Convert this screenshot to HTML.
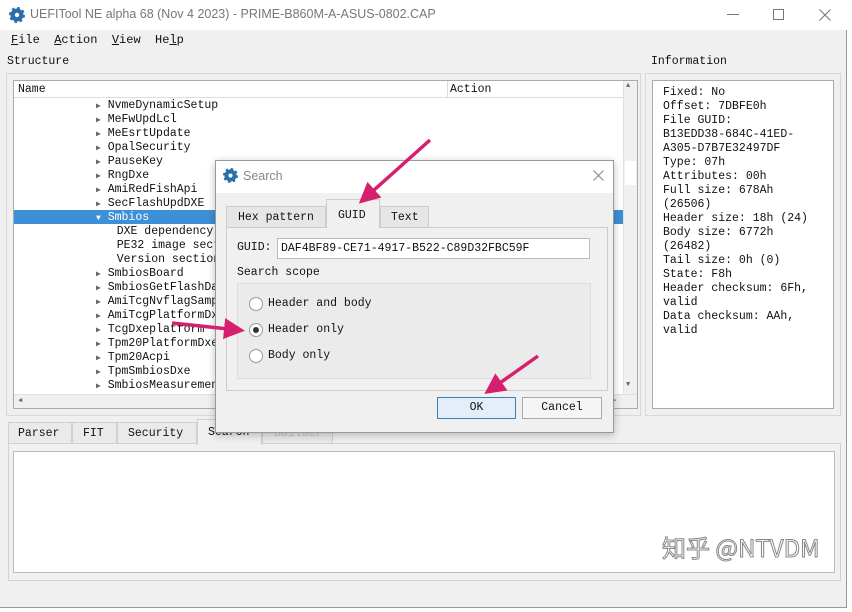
<!DOCTYPE html>
<html><head><meta charset="utf-8"><style>
*{box-sizing:border-box;margin:0;padding:0}
body{width:852px;height:612px;background:#fff;position:relative;overflow:hidden;font-family:"Liberation Mono","DejaVu Sans Mono",monospace;font-size:11.5px;color:#111}
.a{position:absolute}
.win{left:0;top:0;width:847px;height:608px;background:#f0f0f0;border-right:1px solid #999;border-bottom:1px solid #999}
.mono{font-family:"Liberation Mono",monospace;font-size:11.5px;white-space:pre;line-height:14px}
.row{position:absolute;left:0;height:14px;line-height:14px;white-space:pre}
.tri{color:#666;font-size:8px}
</style></head><body>
<div class="a win"></div>
<div class="a" style="left:0;top:0;width:847px;height:30px;background:#fff"></div>
<svg class="a" style="left:9px;top:7px" width="16" height="16" viewBox="0 0 16 16"><circle cx="8" cy="8" r="6.5" fill="#2a6fa8" stroke="#2a6fa8" stroke-width="3" stroke-dasharray="2.5 2.6"/><circle cx="8" cy="8" r="5" fill="#2a6fa8"/><circle cx="8" cy="8" r="2.2" fill="#fff"/></svg>
<div class="a" style="left:30px;top:7px;font-family:'Liberation Sans',sans-serif;font-size:12.5px;color:#777">UEFITool NE alpha 68 (Nov  4 2023) - PRIME-B860M-A-ASUS-0802.CAP</div>
<div class="a" style="left:727px;top:14px;width:12px;height:1px;background:#777"></div>
<div class="a" style="left:773px;top:9px;width:11px;height:11px;border:1px solid #777"></div>
<svg class="a" style="left:819px;top:9px" width="12" height="12"><path d="M0.5 0.5L11.5 11.5M11.5 0.5L0.5 11.5" stroke="#777" stroke-width="1.1"/></svg>
<div class="a mono" style="left:11px;top:33px;font-size:12px"><u>F</u>ile  <u>A</u>ction  <u>V</u>iew  He<u>l</u>p</div>
<div class="a mono" style="left:7px;top:55px">Structure</div>
<div class="a mono" style="left:651px;top:55px">Information</div>
<div class="a" style="left:6px;top:73px;width:635px;height:343px;border:1px solid #d8d8d8"></div>
<div class="a" style="left:13px;top:80px;width:625px;height:329px;background:#fff;border:1px solid #aaa;overflow:hidden">
 <div class="a" style="left:0;top:0;width:609px;height:17px;border-bottom:1px solid #ddd;background:#fff"></div>
 <div class="a mono" style="left:4px;top:2px">Name</div>
 <div class="a" style="left:433px;top:0;width:1px;height:17px;background:#ddd"></div>
 <div class="a mono" style="left:436px;top:2px">Action</div>
 <div class="a" style="left:0;top:129px;width:609px;height:14px;background:#3d8fd6"></div>
 <div class="a mono" style="left:82px;top:18px;">
<div class="row" style="top:0"><span class="tri">▶</span> NvmeDynamicSetup</div>
<div class="row" style="top:14px"><span class="tri">▶</span> MeFwUpdLcl</div>
<div class="row" style="top:28px"><span class="tri">▶</span> MeEsrtUpdate</div>
<div class="row" style="top:42px"><span class="tri">▶</span> OpalSecurity</div>
<div class="row" style="top:56px"><span class="tri">▶</span> PauseKey</div>
<div class="row" style="top:70px"><span class="tri">▶</span> RngDxe</div>
<div class="row" style="top:84px"><span class="tri">▶</span> AmiRedFishApi</div>
<div class="row" style="top:98px"><span class="tri">▶</span> SecFlashUpdDXE</div>
<div class="row" style="top:112px;color:#fff"><span class="tri" style="color:#fff">▼</span> Smbios</div>
<div class="row" style="top:126px">   DXE dependency section</div>
<div class="row" style="top:140px">   PE32 image section</div>
<div class="row" style="top:154px">   Version section</div>
<div class="row" style="top:168px"><span class="tri">▶</span> SmbiosBoard</div>
<div class="row" style="top:182px"><span class="tri">▶</span> SmbiosGetFlashData</div>
<div class="row" style="top:196px"><span class="tri">▶</span> AmiTcgNvflagSample</div>
<div class="row" style="top:210px"><span class="tri">▶</span> AmiTcgPlatformDxe</div>
<div class="row" style="top:224px"><span class="tri">▶</span> TcgDxeplatform</div>
<div class="row" style="top:238px"><span class="tri">▶</span> Tpm20PlatformDxe</div>
<div class="row" style="top:252px"><span class="tri">▶</span> Tpm20Acpi</div>
<div class="row" style="top:266px"><span class="tri">▶</span> TpmSmbiosDxe</div>
<div class="row" style="top:280px"><span class="tri">▶</span> SmbiosMeasurement</div>
 </div>
 <div class="a" style="left:609px;top:0;width:15px;height:313px;background:#f0f0f0;border-left:1px solid #e0e0e0"></div>
 <div class="a" style="left:611px;top:80px;width:11px;height:24px;background:#fff"></div>
 <div class="a" style="left:612px;top:1px;font-size:7px;color:#666">▲</div>
 <div class="a" style="left:612px;top:300px;font-size:7px;color:#666">▼</div>
 <div class="a" style="left:0;top:313px;width:624px;height:15px;background:#f0f0f0;border-top:1px solid #e0e0e0"></div>
 <div class="a" style="left:4px;top:315px;font-size:7px;color:#666">◀</div>
 <div class="a" style="left:598px;top:315px;font-size:7px;color:#666">▶</div>
</div>
<div class="a" style="left:645px;top:73px;width:196px;height:343px;border:1px solid #d8d8d8"></div>
<div class="a mono" style="left:652px;top:80px;width:182px;height:329px;background:#fff;border:1px solid #aaa;padding:5px 0 0 10px">Fixed: No
Offset: 7DBFE0h
File GUID:
B13EDD38-684C-41ED-
A305-D7B7E32497DF
Type: 07h
Attributes: 00h
Full size: 678Ah
(26506)
Header size: 18h (24)
Body size: 6772h
(26482)
Tail size: 0h (0)
State: F8h
Header checksum: 6Fh,
valid
Data checksum: AAh,
valid</div>
<div class="a" style="left:8px;top:443px;width:833px;height:138px;border:1px solid #d0d0d0;background:#f0f0f0"></div>
<div class="a" style="left:13px;top:451px;width:822px;height:122px;background:#fff;border:1px solid #bbb"></div>
<div class="a mono" style="left:8px;top:422px;width:64px;height:22px;border:1px solid #d0d0d0;background:#eaeaea;padding:4px 0 0 9px">Parser</div>
<div class="a mono" style="left:72px;top:422px;width:45px;height:22px;border:1px solid #d0d0d0;background:#eaeaea;padding:4px 0 0 10px">FIT</div>
<div class="a mono" style="left:117px;top:422px;width:80px;height:22px;border:1px solid #d0d0d0;background:#eaeaea;padding:4px 0 0 10px">Security</div>
<div class="a mono" style="left:197px;top:419px;width:65px;height:26px;border:1px solid #d0d0d0;border-bottom:none;background:#f0f0f0;padding:6px 0 0 10px">Search</div>
<div class="a mono" style="left:262px;top:422px;width:71px;height:22px;border:1px solid #d0d0d0;background:#eaeaea;padding:4px 0 0 11px;color:#c8c8c8">Builder</div>
<div class="a" style="left:662px;top:532px;font-family:'Noto Sans CJK SC',sans-serif;font-size:24px;line-height:30px;color:#fff;-webkit-text-stroke:1px #888;white-space:nowrap">知乎 @NTVDM</div>
<div class="a" style="left:215px;top:160px;width:399px;height:273px;background:#f0f0f0;border:1px solid #999;box-shadow:0 2px 8px rgba(0,0,0,.25)"></div>
<div class="a" style="left:216px;top:161px;width:397px;height:32px;background:#fff"></div>
<svg class="a" style="left:223px;top:168px" width="15" height="15" viewBox="0 0 16 16"><circle cx="8" cy="8" r="6.5" fill="#2a6fa8" stroke="#2a6fa8" stroke-width="3" stroke-dasharray="2.5 2.6"/><circle cx="8" cy="8" r="5" fill="#2a6fa8"/><circle cx="8" cy="8" r="2.2" fill="#fff"/></svg>
<div class="a" style="left:243px;top:169px;font-family:'Liberation Sans',sans-serif;font-size:12.5px;color:#888">Search</div>
<svg class="a" style="left:593px;top:170px" width="11" height="11"><path d="M0.5 0.5L10.5 10.5M10.5 0.5L0.5 10.5" stroke="#888" stroke-width="1.1"/></svg>
<div class="a" style="left:226px;top:227px;width:382px;height:164px;border:1px solid #ccc;background:#f0f0f0"></div>
<div class="a mono" style="left:226px;top:206px;width:100px;height:22px;border:1px solid #ccc;background:#e6e6e6;padding:4px 0 0 11px">Hex pattern</div>
<div class="a mono" style="left:326px;top:199px;width:54px;height:29px;border:1px solid #ccc;border-bottom:none;background:#f0f0f0;padding:9px 0 0 11px">GUID</div>
<div class="a mono" style="left:380px;top:206px;width:49px;height:22px;border:1px solid #ccc;background:#e6e6e6;padding:4px 0 0 10px">Text</div>
<div class="a mono" style="left:237px;top:241px">GUID:</div>
<div class="a mono" style="left:277px;top:238px;width:313px;height:21px;background:#fff;border:1px solid #bbb;padding:3px 0 0 3px">DAF4BF89-CE71-4917-B522-C89D32FBC59F</div>
<div class="a mono" style="left:237px;top:266px">Search scope</div>
<div class="a" style="left:237px;top:283px;width:354px;height:96px;border:1px solid #ddd;background:#ebebeb"></div>
<div class="a" style="left:249px;top:297px;width:14px;height:14px;border-radius:50%;border:1px solid #999;background:#fff"></div>
<div class="a" style="left:249px;top:323px;width:14px;height:14px;border-radius:50%;border:1px solid #999;background:#fff"></div>
<div class="a" style="left:253px;top:327px;width:6px;height:6px;border-radius:50%;background:#333"></div>
<div class="a" style="left:249px;top:349px;width:14px;height:14px;border-radius:50%;border:1px solid #999;background:#fff"></div>
<div class="a mono" style="left:268px;top:297px">Header and body</div>
<div class="a mono" style="left:268px;top:323px">Header only</div>
<div class="a mono" style="left:268px;top:349px">Body only</div>
<div class="a mono" style="left:437px;top:397px;width:79px;height:22px;border:1px solid #3c7fb1;background:#e3eef8;text-align:center;padding-top:3px">OK</div>
<div class="a mono" style="left:522px;top:397px;width:80px;height:22px;border:1px solid #aaa;background:#f5f5f5;text-align:center;padding-top:3px">Cancel</div>
<svg class="a" style="left:0;top:0" width="852" height="612">
<defs><marker id="m" markerWidth="6" markerHeight="6" refX="4" refY="3" orient="auto"><path d="M0,0 L6,3 L0,6 z" fill="#d6206e"/></marker></defs>
<g stroke="#d6206e" stroke-width="3.5" fill="none" marker-end="url(#m)">
<line x1="430" y1="140" x2="364" y2="199"/>
<line x1="172" y1="323" x2="238" y2="330"/>
<line x1="538" y1="356" x2="490" y2="390"/>
</g></svg>
</body></html>
